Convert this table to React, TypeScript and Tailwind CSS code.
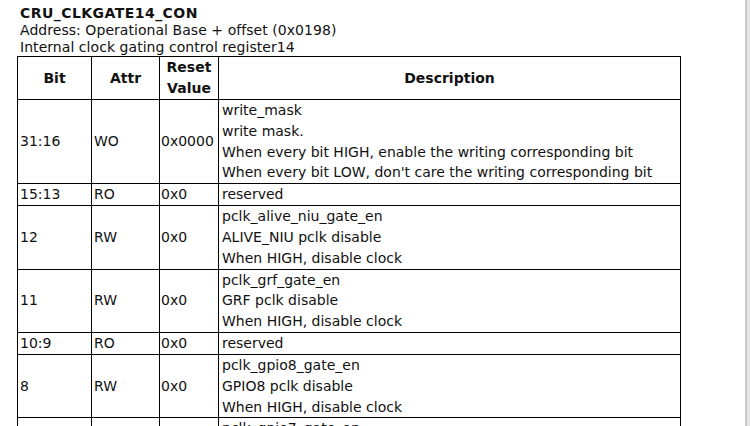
import React from "react";

type Row = { bit: string; attr: string; reset: string; desc: string[] };

const rows: Row[] = [
  {
    bit: "31:16",
    attr: "WO",
    reset: "0x0000",
    desc: [
      "write_mask",
      "write mask.",
      "When every bit HIGH, enable the writing corresponding bit",
      "When every bit LOW, don't care the writing corresponding bit",
    ],
  },
  { bit: "15:13", attr: "RO", reset: "0x0", desc: ["reserved"] },
  {
    bit: "12",
    attr: "RW",
    reset: "0x0",
    desc: ["pclk_alive_niu_gate_en", "ALIVE_NIU pclk disable", "When HIGH, disable clock"],
  },
  {
    bit: "11",
    attr: "RW",
    reset: "0x0",
    desc: ["pclk_grf_gate_en", "GRF pclk disable", "When HIGH, disable clock"],
  },
  { bit: "10:9", attr: "RO", reset: "0x0", desc: ["reserved"] },
  {
    bit: "8",
    attr: "RW",
    reset: "0x0",
    desc: ["pclk_gpio8_gate_en", "GPIO8 pclk disable", "When HIGH, disable clock"],
  },
  {
    bit: "7",
    attr: "RW",
    reset: "0x0",
    desc: ["pclk_gpio7_gate_en", "GPIO7 pclk disable", "When HIGH, disable clock"],
  },
];

const App = () => {
  return (
    <div className="flex h-[426px] w-[750px] overflow-hidden bg-white font-['DejaVu_Sans',sans-serif] text-[14px] text-[#111]">
      <div className="flex-1 pl-[17px] pt-[5px]">
        <div className="pl-[3px]">
          <div className="font-bold leading-[17px] tracking-[0.45px]">CRU_CLKGATE14_CON</div>
          <div className="leading-[17px] tracking-[0.05px]">Address: Operational Base + offset (0x0198)</div>
          <div className="leading-[17px] tracking-[0.05px]">Internal clock gating control register14</div>
        </div>
        <table className="w-[664px] table-fixed border-collapse">
          <colgroup>
            <col className="w-[74px]" />
            <col className="w-[68px]" />
            <col className="w-[59px]" />
            <col />
          </colgroup>
          <thead>
            <tr className="h-[42px] font-bold">
              <th className="border border-black text-center">Bit</th>
              <th className="border border-black text-center">Attr</th>
              <th className="border border-black text-center leading-[21px]">
                Reset
                <br />
                Value
              </th>
              <th className="border border-black text-center">Description</th>
            </tr>
          </thead>
          <tbody>
            {rows.map((r) => (
              <tr key={r.bit}>
                <td className="border border-black px-[2px] align-middle">{r.bit}</td>
                <td className="border border-black px-[2px] align-middle">{r.attr}</td>
                <td className="border border-black px-[1px] align-middle">{r.reset}</td>
                <td className="border border-black px-[3px] leading-[20.8px]">
                  {r.desc.map((d) => (
                    <div key={d}>{d}</div>
                  ))}
                </td>
              </tr>
            ))}
          </tbody>
        </table>
      </div>
      <div className="w-[5px] border-l-[2px] border-[#c9c9c9] bg-[#e4e4e4]" />
    </div>
  );
};

export default App;
